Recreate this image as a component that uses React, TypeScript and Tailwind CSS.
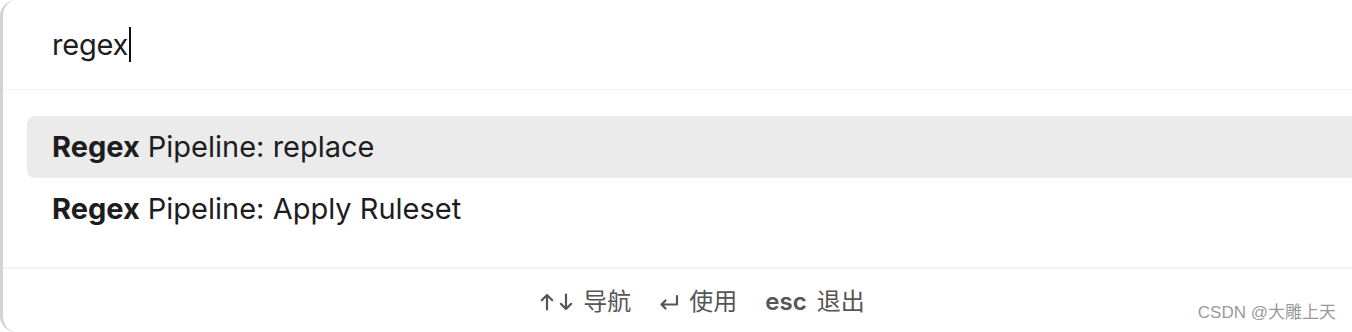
function ArrowUp() {
  return (
    <svg width="14" height="18" viewBox="0 0 14 18" fill="none" stroke="currentColor" strokeWidth="2.2" strokeLinecap="round" strokeLinejoin="round">
      <path d="M7 16.5V2M1.8 7.2L7 2l5.2 5.2" />
    </svg>
  );
}

function ArrowDown() {
  return (
    <svg width="14" height="18" viewBox="0 0 14 18" fill="none" stroke="currentColor" strokeWidth="2.2" strokeLinecap="round" strokeLinejoin="round">
      <path d="M7 1.5V16M1.8 10.8L7 16l5.2-5.2" />
    </svg>
  );
}

function EnterIcon() {
  return (
    <svg width="20" height="16" viewBox="0 0 20 16" fill="none" stroke="currentColor" strokeWidth="2.2" strokeLinecap="round" strokeLinejoin="round">
      <path d="M18 2v8.5H2.5M6.5 6.5l-4 4 4 4" />
    </svg>
  );
}

export default function App() {
  const rows = ['replace', 'Apply Ruleset'];

  return (
    <div className="relative h-[332px] w-[1352px] overflow-hidden bg-white font-['Inter','Noto_Sans_CJK_SC',sans-serif] text-[#1d1d1f]">
      <div className="flex h-full w-[1402px] flex-col rounded-l-[16px] border-l-[3px] border-[#d3d3d3]">
        {/* search input */}
        <div className="flex h-[90px] shrink-0 items-center border-b border-[#f1f1f1] pl-[49px]">
          <span className="text-[29px] leading-none tracking-[-0.2px]">regex</span>
          <span className="ml-[1px] inline-block h-[35px] w-[2px] bg-[#111]" />
        </div>

        {/* results */}
        <div className="shrink-0 pb-[27px] pl-[24px] pt-[26px]">
          {rows.map((r, i) => (
            <div
              key={r}
              className={`flex h-[62px] items-center rounded-l-[8px] pl-[25px] text-[29px] ${
                i === 0 ? 'bg-[#ebebeb]' : ''
              }`}
            >
              <span className="font-bold">Regex</span>
              <span className="ml-[8px]">Pipeline: {r}</span>
            </div>
          ))}
        </div>

        {/* footer hints */}
        <div className="flex flex-1 items-center justify-center gap-[28px] border-t-2 border-[#f3f3f3] pt-[3px] text-[24px] text-[#555]">
          <span className="flex items-center gap-[10px]">
            <span className="flex items-center gap-[5px]">
              <ArrowUp />
              <ArrowDown />
            </span>
            <span>导航</span>
          </span>
          <span className="flex items-center gap-[10px]">
            <EnterIcon />
            <span>使用</span>
          </span>
          <span className="flex items-center gap-[10px]">
            <span className="font-semibold">esc</span>
            <span>退出</span>
          </span>
        </div>
      </div>

      <span className="absolute bottom-[7px] right-[16px] font-['Liberation_Sans','Noto_Sans_CJK_SC',sans-serif] text-[17px] text-[#9a9a9a]">
        CSDN @大雕上天
      </span>
    </div>
  );
}
